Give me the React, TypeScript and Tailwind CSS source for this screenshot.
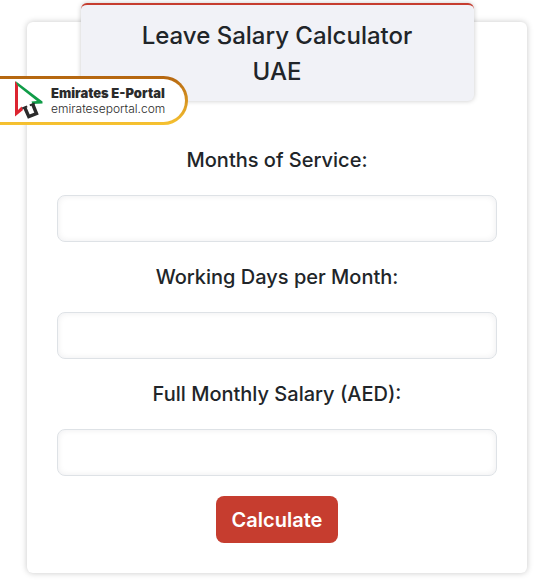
import { useState } from 'react';
import type { FormEvent } from 'react';

const fields = [
  { id: 'months', label: 'Months of Service:' },
  { id: 'days', label: 'Working Days per Month:' },
  { id: 'salary', label: 'Full Monthly Salary (AED):' },
];

function PortalLogo() {
  return (
    <svg width="28" height="39" viewBox="0 0 28 39" fill="none" aria-hidden="true">
      {/* Cursor arrow in the flag colours */}
      <path d="M0 0 L3 3.5 L3 29 L6.5 25.5 L8 29 L0 35.5 Z" fill="#dc2430" />
      <path d="M0.5 0 L27.5 20.5 L27.5 22.5 L17.5 23 L16.5 20.5 L22 20 L3 5 Z" fill="#109c48" />
      {/* U shaped tail */}
      <path d="M9.5 26 L13.8 35.6 L21.5 32.6 L17.6 23" stroke="#2b2b2b" strokeWidth="3.4" />
      <path d="M7.2 27.4 L12.2 25.4 M14.8 24.4 L19.6 22.4" stroke="#2b2b2b" strokeWidth="2" />
    </svg>
  );
}

function PortalBadge() {
  return (
    <a
      href="#"
      className="absolute top-[76px] left-0 rounded-r-full bg-linear-to-b from-[#b4650f] to-[#f7c331] py-[3px] pr-[3px]"
    >
      <span className="flex h-[43px] items-center gap-2 rounded-r-full bg-white pr-5 pl-[15px]">
        <PortalLogo />
        <span className="flex flex-col text-[#2b2b2b]">
          <span className="text-[13px] leading-[15px] font-black">Emirates E-Portal</span>
          <span className="text-xs leading-[15px] font-light">emirateseportal.com</span>
        </span>
      </span>
    </a>
  );
}

export default function App() {
  const [values, setValues] = useState<Record<string, string>>({});

  const handleSubmit = (e: FormEvent) => {
    e.preventDefault();
  };

  return (
    <main className="relative bg-white pt-[22px] pr-6 pb-3 pl-[27px] font-['Inter',sans-serif] text-[#212529]">
      <form
        onSubmit={handleSubmit}
        className="flex flex-col items-center rounded-md bg-white px-[30px] pb-[30px] shadow-[0_0_6px_rgba(0,0,0,0.22)]"
      >
        <h1 className="-mt-[19px] mb-11 w-[90%] max-w-[393px] rounded-md border-t-2 border-[#c63d2f] bg-[#f1f2f7] px-12 pt-[13px] pb-[11px] text-center text-2xl leading-9 font-medium shadow-[0_0_5px_rgba(0,0,0,0.22)]">
          Leave Salary Calculator UAE
        </h1>

        {fields.map((field) => (
          <div key={field.id} className="mb-5 flex w-full flex-col gap-5">
            <label htmlFor={field.id} className="text-center text-xl leading-[30px] font-medium">
              {field.label}
            </label>
            <input
              id={field.id}
              type="text"
              inputMode="numeric"
              value={values[field.id] ?? ''}
              onChange={(e) => setValues({ ...values, [field.id]: e.target.value })}
              className="h-[47px] w-full rounded-lg border border-[#dee2e6] bg-white px-3 text-xl shadow-[inset_0_0_6px_rgba(0,0,40,0.08)] outline-none"
            />
          </div>
        ))}

        <button type="submit" className="h-[47px] rounded-lg bg-[#c63d2f] px-4 text-xl font-semibold text-white">
          Calculate
        </button>
      </form>

      <PortalBadge />
    </main>
  );
}
